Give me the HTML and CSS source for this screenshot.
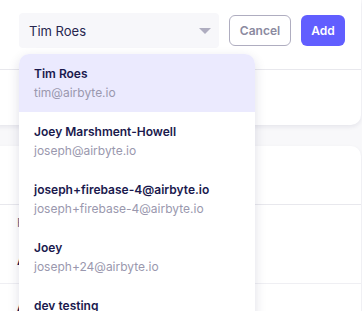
FILE: index.html
```html
<!DOCTYPE html>
<html lang="en">
<head>
  <meta charset="UTF-8">
  <title>Add user</title>
  <link rel="stylesheet" href="styles.css">
</head>
<body>
  <div class="card card-top">
    <div class="form-row">
      <div class="select-wrap">
        <div class="select">
          <span>Tim Roes</span>
          <svg class="caret" width="12" height="6" viewBox="0 0 12 6"><path d="M0 0h12L6 6z" fill="#afadc0"/></svg>
        </div>

        <!-- Dropdown menu -->
        <div class="menu">
          <div class="menu-item active">
            <div class="name">Tim Roes</div>
            <div class="email">tim@airbyte.io</div>
          </div>
          <div class="menu-item">
            <div class="name">Joey Marshment-Howell</div>
            <div class="email">joseph@airbyte.io</div>
          </div>
          <div class="menu-item">
            <div class="name">joseph+firebase-4@airbyte.io</div>
            <div class="email">joseph+firebase-4@airbyte.io</div>
          </div>
          <div class="menu-item">
            <div class="name">Joey</div>
            <div class="email">joseph+24@airbyte.io</div>
          </div>
          <div class="menu-item">
            <div class="name">dev testing</div>
            <div class="email">dev@airbyte.io</div>
          </div>
        </div>
      </div>
      <button class="btn btn-secondary">Cancel</button>
      <button class="btn btn-primary">Add</button>
    </div>
    <div class="card-body"></div>
  </div>

  <div class="card card-list">
    <div class="list-head"></div>
    <div class="list-row">
      <div class="label">Full name</div>
      <div class="value">Alex Birdsall</div>
    </div>
    <div class="list-row">
      <div class="value">Abhi Vaidyanatha</div>
    </div>
  </div>
</body>
</html>
```

FILE: styles.css
```css
body {
  margin: 0;
  font-family: Inter, "Noto Sans", sans-serif;
  background-color: #f8f8fa;
  color: #1a194d;
  overflow: hidden;
}
.card {
  background-color: #ffffff;
  margin: 0 1px 0 -12px;
  border-radius: 10px;
  box-shadow: 0 2px 4px rgba(26, 25, 77, 0.08);
}
.card-top {
  border-top-left-radius: 0;
  border-top-right-radius: 0;
}
.form-row {
  display: flex;
  align-items: center;
  gap: 10px;
  padding: 13px 0 21px 31px;
  border-bottom: 1px solid #e8e8ed;
}
.select-wrap {
  position: relative;
}
.select {
  width: 200px;
  height: 35px;
  box-sizing: border-box;
  display: flex;
  align-items: center;
  justify-content: space-between;
  padding: 0 8px 0 10px;
  background-color: #f7f7fa;
  border-radius: 4px;
  font-size: 13px;
  color: #27264f;
}
.btn {
  height: 31px;
  box-sizing: border-box;
  font-family: Inter, "Noto Sans", sans-serif;
  font-size: 12px;
  font-weight: 600;
  border-radius: 6px;
  cursor: pointer;
}
.btn-secondary {
  width: 62px;
  background-color: #ffffff;
  border: 1px solid #afadc0;
  color: #8b8aa0;
}
.btn-primary {
  width: 44px;
  background-color: #615eff;
  border: none;
  color: #ffffff;
}
.card-body {
  height: 55px;
}
.card-list {
  margin-top: 21px;
}
.list-head {
  height: 58px;
  border-bottom: 1px solid #e8e8ed;
}
.list-row {
  height: 79px;
  padding: 10px 0 0 29px;
  box-sizing: border-box;
  border-bottom: 1px solid #efeff3;
}
.label {
  font-size: 12px;
  color: #6b6a85;
  margin-bottom: 22px;
}
.value {
  font-size: 13px;
  font-weight: 600;
}
.list-row:last-child {
  padding-top: 14px;
}
.menu {
  position: absolute;
  top: 41px;
  left: 0;
  width: 236px;
  background-color: #ffffff;
  border-radius: 10px;
  overflow: hidden;
  box-shadow: 0 4px 12px rgba(26, 25, 77, 0.14);
  z-index: 10;
}
.menu-item {
  height: 58px;
  box-sizing: border-box;
  padding: 11px 15px 0;
  font-size: 12px;
  line-height: 18px;
}
.menu-item.active {
  background-color: #ebeafe;
}
.name {
  font-weight: 600;
  color: #1a194d;
}
.email {
  margin-top: 1px;
  color: #9a98ae;
}
```
